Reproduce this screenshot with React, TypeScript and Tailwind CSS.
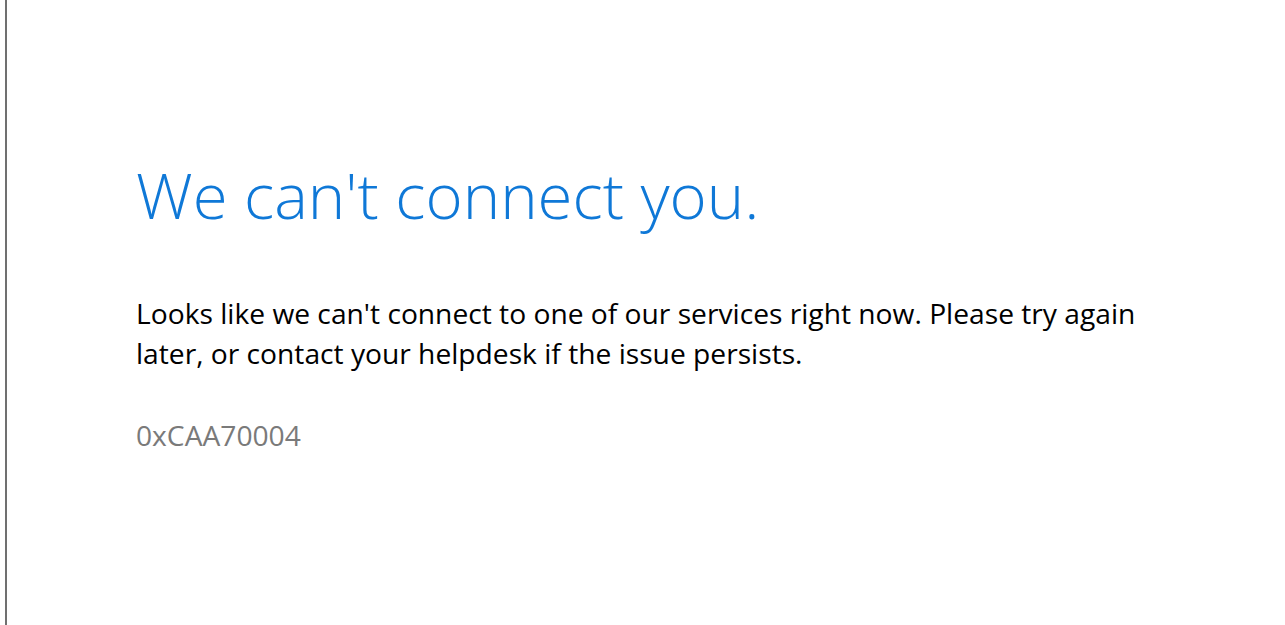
export default function App() {
  return (
    <div className="h-[625px] w-full bg-white flex overflow-hidden">
      <div className="ml-[5px] w-[2px] h-full bg-[#707070]" />
      <div className="pl-[129px] pt-[150px] font-['Open_Sans',sans-serif]">
        <h1 className="text-[63.5px] leading-[90px] font-light text-[#0f78d7]">
          We can't connect you.
        </h1>
        <p className="mt-[53px] text-[28.2px] leading-[40px] text-black">
          Looks like we can't connect to one of our services right now. Please try again
          <br />
          later, or contact your helpdesk if the issue persists.
        </p>
        <p className="mt-[42px] text-[28.2px] leading-[40px] text-[#7a7a7a]">0xCAA70004</p>
      </div>
    </div>
  );
}
